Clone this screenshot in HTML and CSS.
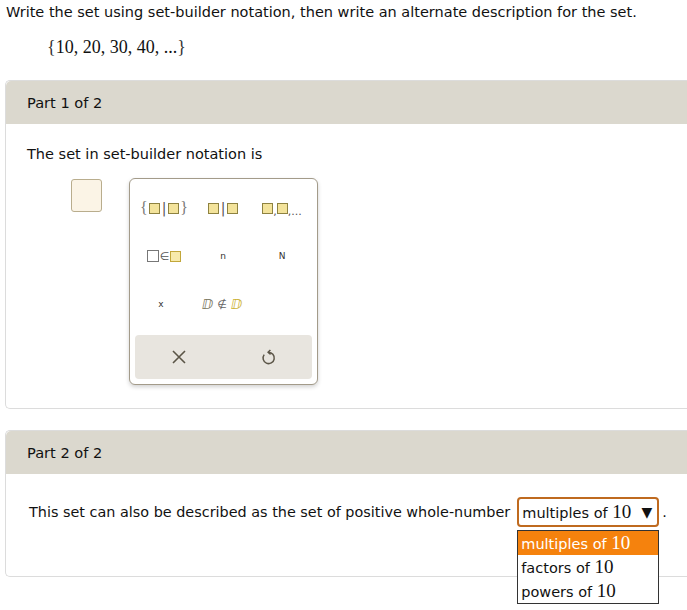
FILE: index.html
```html
<!DOCTYPE html>
<html>
<head>
<meta charset="utf-8">
<link rel="stylesheet" href="styles.css">
</head>
<body>
<div class="prompt">Write the set using set-builder notation, then write an alternate description for the set.</div>
<div class="given"><span class="brace">{</span>10, 20, 30, 40, ...<span class="brace">}</span></div>

<section class="card card1">
  <div class="card-head">Part 1 of 2</div>
  <div class="card-body">
    <div class="line">The set in set-builder notation is</div>
    <div class="work">
      <div class="answer-box"></div>
      <div class="palette">
        <div class="grid">
          <div class="cell"><span class="br">{</span><span class="sq"></span><span class="bar">|</span><span class="sq"></span><span class="br">}</span></div>
          <div class="cell"><span class="sq"></span><span class="bar">|</span><span class="sq"></span></div>
          <div class="cell"><span class="sq"></span><span class="cm">,</span><span class="sq"></span><span class="cm">,...</span></div>
          <div class="cell"><span class="sq empty"></span><span class="el">∈</span><span class="sq light"></span></div>
          <div class="cell small">n</div>
          <div class="cell small">N</div>
          <div class="cell small xcell">x</div>
          <div class="cell dd"><span class="ds gray">ⅅ</span><span class="nin">∉</span><span class="ds gold">ⅅ</span></div>
          <div class="cell"></div>
        </div>
        <div class="actions">
          <div class="act">
            <svg width="16" height="16" viewBox="0 0 16 16"><path d="M2 2 L14 14 M14 2 L2 14" stroke="#5b5547" stroke-width="1.6" fill="none"/></svg>
          </div>
          <div class="act">
            <svg width="16" height="18" viewBox="0 0 16 18"><path d="M4.2 6.6 A5.6 5.6 0 1 0 8.4 4.4" stroke="#5b5547" stroke-width="1.5" fill="none"/><path d="M10.4 1.9 L8.1 4.3 L10.6 6.4" stroke="#5b5547" stroke-width="1.5" fill="none"/></svg>
          </div>
        </div>
      </div>
    </div>
  </div>
</section>

<section class="card card2">
  <div class="card-head">Part 2 of 2</div>
  <div class="card-body body2">
    <div class="line2">This set can also be described as the set of positive whole-number
      <span class="select-wrap">
        <span class="select"><span>multiples of <span class="num">10</span></span><span class="tri">▼</span></span>
        <span class="list">
          <span class="opt on">multiples of <span class="num">10</span></span>
          <span class="opt">factors of <span class="num">10</span></span>
          <span class="opt">powers of <span class="num">10</span></span>
        </span>
      </span><span class="dot">.</span>
    </div>
  </div>
</section>
</body>
</html>
```

FILE: styles.css
```css
html, body { margin: 0; padding: 0; background: #fff; }
body {
  font-family: "DejaVu Sans", Verdana, sans-serif;
  color: #111;
  width: 687px;
  height: 610px;
  overflow: hidden;
}
.prompt {
  font-size: 14.5px;
  line-height: 24px;
  padding-left: 6px;
  white-space: nowrap;
}
.given {
  font-family: "Liberation Serif", "Times New Roman", serif;
  font-size: 18px;
  line-height: 24px;
  padding: 11px 0 0 47px;
  height: 45px;
}
.brace { color: #333; }

.card {
  margin-left: 5px;
  width: 700px;
  border: 1px solid #dcdcdc;
  border-right: none;
  border-radius: 5px 0 0 5px;
  box-sizing: border-box;
  overflow: visible;
}
.card1 { height: 329px; }
.card2 { height: 147px; margin-top: 21px; }
.card-head {
  background: #dbd8ce;
  height: 43px;
  line-height: 44px;
  padding-left: 21px;
  font-size: 14.6px;
  border-radius: 5px 0 0 0;
}
.card-body { padding-left: 21px; }
.line { font-size: 14.5px; padding-top: 20px; line-height: 20px; }
.work { display: flex; align-items: flex-start; padding-top: 14px; }
.answer-box {
  width: 29px; height: 31px;
  margin: 1px 0 0 44px;
  background: #fbf4e6;
  border: 1px solid #b9ad8d;
  border-radius: 3px;
}
.palette {
  margin-left: 27px;
  width: 189px;
  height: 207px;
  box-sizing: border-box;
  border: 1px solid #a39b8a;
  border-radius: 6px;
  background: #fff;
  box-shadow: 0 2px 4px rgba(0,0,0,0.18);
  padding: 5px 5px 5px;
  display: flex;
  flex-direction: column;
}
.grid {
  display: grid;
  grid-template-columns: 58px 60px 58px;
  grid-auto-rows: 48px;
}
.cell {
  display: flex;
  align-items: center;
  justify-content: center;
  color: #444;
  font-size: 11px;
}
.cell.small { font-size: 9px; color: #333; }
.cell.xcell { padding-right: 6px; }
.sq {
  display: inline-block;
  width: 9px; height: 9px;
  border: 1.5px solid #8e8240;
  background: #f3e39b;
}
.sq.empty { background: #fff; border: 1px solid #777; width: 10px; height: 10px; }
.sq.light { background: #f7eaab; border-color: #c2a73a; }
.br { font-family: "Liberation Serif", serif; font-size: 16px; color: #777; line-height: 1; margin: 0 1px; }
.bar { font-size: 14px; color: #555; margin: 0 2px; line-height: 1; }
.cm { font-size: 11px; color: #555; align-self: flex-end; margin-bottom: 14px; }
.el { font-size: 11px; color: #555; margin: 0 1px; }
.dd { font-family: "DejaVu Sans", sans-serif; padding-right: 2px; }
.ds { font-size: 14px; }
.ds.gray { color: #7a7660; }
.ds.gold { color: #cbb133; }
.nin { font-size: 11px; color: #666; margin: 0 4px; }
.actions {
  margin-top: 7px;
  height: 44px;
  background: #e8e5df;
  border-radius: 4px;
  display: flex;
}
.act { flex: 1; display: flex; align-items: center; justify-content: center; }

.body2 { padding-left: 23px; }
.line2 {
  font-size: 14.4px;
  padding-top: 23px;
  line-height: 30px;
  white-space: nowrap;
  display: flex;
  align-items: center;
}
.select-wrap {
  position: relative;
  margin-left: 7px;
  display: inline-block;
}
.select {
  display: flex;
  align-items: center;
  justify-content: space-between;
  width: 142px;
  height: 30px;
  box-sizing: border-box;
  border: 2px solid #bf6a1f;
  border-radius: 4px;
  padding: 0 5px 0 3px;
  font-size: 14.5px;
  background: #fff;
}
.num { font-family: "Liberation Serif", serif; font-size: 19px; }
.tri { font-size: 14px; color: #111; }
.dot { margin-left: 3px; }
.list {
  position: absolute;
  left: 0; top: 33px;
  width: 142px;
  box-sizing: border-box;
  border: 1px solid #333;
  background: #fff;
  display: flex;
  flex-direction: column;
}
.opt {
  height: 24px;
  line-height: 24px;
  padding-left: 3px;
  font-size: 14.5px;
  color: #111;
}
.opt.on { background: #f5820d; color: #fff; }
```
